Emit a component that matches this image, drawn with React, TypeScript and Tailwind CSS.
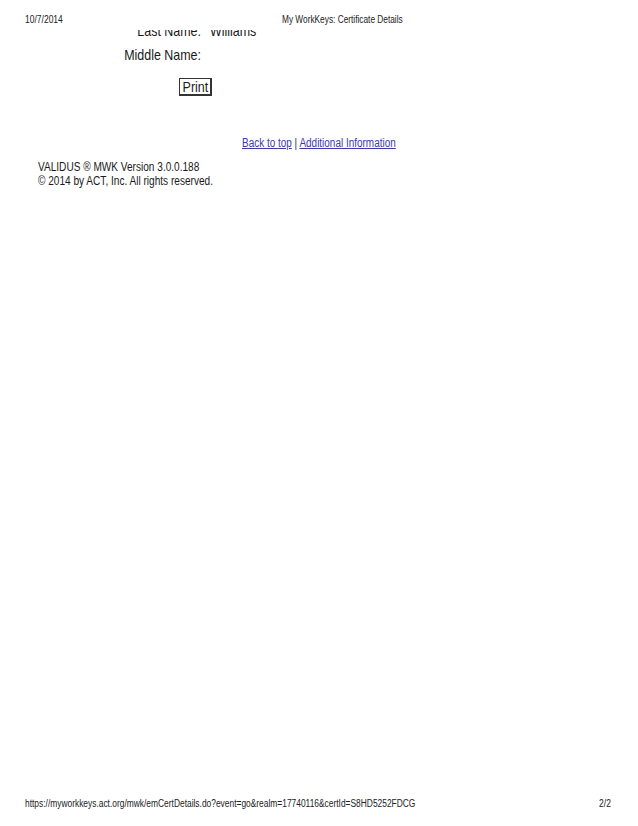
export default function App() {
  return (
    <div className="w-[638px] h-[826px] bg-white text-[#1a1a1a] flex flex-col font-['Liberation_Sans',Arial,sans-serif]">
      {/* print header */}
      <div className="flex pt-[14px] pl-[25px] text-[10px] leading-[12px] text-[#222] h-[26px]">
        <div className="w-[257px]">
          <span className="inline-block origin-left scale-x-[0.85] whitespace-nowrap">10/7/2014</span>
        </div>
        <div>
          <span className="inline-block origin-left scale-x-[0.83] whitespace-nowrap">My WorkKeys: Certificate Details</span>
        </div>
      </div>

      {/* clipped row from previous page */}
      <div className="mt-[4px] h-[9px] overflow-hidden">
        <div className="-mt-[7px] grid grid-cols-[201px_1fr] gap-x-[9px] text-[15px] leading-[15px]">
          <div className="origin-right scale-x-[0.83] text-right whitespace-nowrap">Last Name:</div>
          <div>
            <span className="inline-block origin-left scale-x-[0.83] whitespace-nowrap">Williams</span>
          </div>
        </div>
      </div>

      <div className="mt-[8px] grid grid-cols-[201px_1fr] gap-x-[9px] text-[15px] leading-[15px]">
        <div className="origin-right scale-x-[0.83] text-right whitespace-nowrap">Middle Name:</div>
        <div></div>
      </div>

      <div className="mt-[16px] pl-[179px] flex">
        <button className="w-[33px] h-[18px] flex items-center justify-center border border-[#333] border-r-[2px] border-b-[2px] bg-white text-[15px] leading-[14px] text-[#1a1a1a] font-['Liberation_Sans',Arial,sans-serif]">
          <span className="inline-block scale-x-[0.83] whitespace-nowrap">Print</span>
        </button>
      </div>

      <div className="mt-[40px] pl-[242px] text-[12px] leading-[14px]">
        <div className="origin-left scale-x-[0.83] whitespace-nowrap">
          <a href="#" className="text-[#3a3aa8] underline">Back to top</a>
          <span className="text-[#333]"> | </span>
          <a href="#" className="text-[#3a3aa8] underline">Additional Information</a>
        </div>
      </div>

      <div className="mt-[10px] pl-[38px] text-[12px] leading-[14px]">
        <div className="origin-left scale-x-[0.84] whitespace-nowrap">VALIDUS ® MWK Version 3.0.0.188</div>
        <div className="origin-left scale-x-[0.84] whitespace-nowrap">© 2014 by ACT, Inc. All rights reserved.</div>
      </div>

      <div className="flex-1" />

      {/* print footer */}
      <div className="flex justify-between pl-[25px] pr-[27px] pb-[16px] text-[10px] leading-[12px] text-[#222]">
        <div className="origin-left scale-x-[0.84] whitespace-nowrap">
          https://myworkkeys.act.org/mwk/emCertDetails.do?event=go&amp;realm=17740116&amp;certId=S8HD5252FDCG
        </div>
        <div className="origin-right scale-x-[0.85] whitespace-nowrap">2/2</div>
      </div>
    </div>
  );
}
